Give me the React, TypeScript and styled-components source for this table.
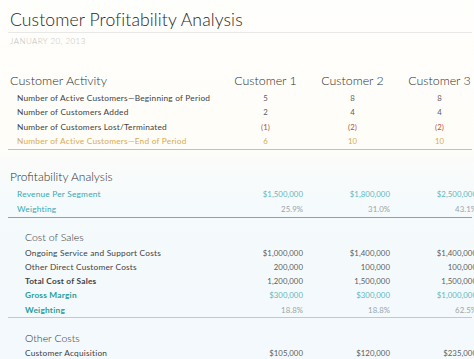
import React from "react";
import styled, { createGlobalStyle, css } from "styled-components";

const GlobalStyle = createGlobalStyle`
  html, body {
    margin: 0;
    padding: 0;
    width: 474px;
    height: 359px;
    overflow: hidden;
  }
  body {
    font-family: "Lato", "Liberation Sans", sans-serif;
    background: linear-gradient(
      to bottom,
      #fefefc 0px,
      #fffdf8 140px,
      #fbfcfa 160px,
      #f5fafc 200px,
      #f3f9fc 359px
    );
    color: #3a3a3a;
  }
`;

const Sheet = styled.div`
  width: 490px;
  padding: 0 0 0 8px;
  box-sizing: border-box;
`;

const TitleBar = styled.header`
  width: 464px;
  padding: 9px 0 0 2px;
  height: 33px;
  box-sizing: border-box;
  border-bottom: 1px solid #e8e8e6;
`;

const Title = styled.h1`
  margin: 0;
  font-size: 17.6px;
  line-height: 22px;
  font-weight: 300;
  color: #262626;
  letter-spacing: 0.1px;
`;

const DateLine = styled.div`
  padding: 3px 0 0 2px;
  font-size: 8px;
  line-height: 10px;
  letter-spacing: 0.45px;
  font-weight: 300;
  color: #bdbdb8;
`;

const Grid = styled.div<{ $top: number }>`
  display: grid;
  grid-template-columns: 214px 87px 87px 87px;
  margin-top: ${(p) => p.$top}px;
`;

type Tone = "dark" | "gold" | "teal" | "tealBold" | "red" | "grey" | "lightTeal" | "lightGrey";

const toneColor: Record<Tone, string> = {
  dark: "#424242",
  gold: "#d9ab52",
  teal: "#3aa9b2",
  tealBold: "#2a9d9a",
  red: "#b5533f",
  grey: "#5e5e5e",
  lightTeal: "#62b8c0",
  lightGrey: "#98a6a8",
};

const SectionTitle = styled.div<{ $size: number; $height: number; $indent: number }>`
  grid-column: 1 / 2;
  font-size: ${(p) => p.$size}px;
  line-height: ${(p) => p.$height}px;
  height: ${(p) => p.$height}px;
  padding-left: ${(p) => p.$indent}px;
  font-weight: 300;
  color: #2e2e2e;
  white-space: nowrap;
`;

const ColumnHead = styled.div<{ $height: number }>`
  font-size: 12.4px;
  line-height: ${(p) => p.$height}px;
  height: ${(p) => p.$height}px;
  font-weight: 300;
  text-align: center;
  color: #2e2e2e;
  white-space: nowrap;
`;

const Spacer = styled.div`
  grid-column: 2 / 5;
`;

const Label = styled.div<{ $tone: Tone; $indent: number; $bold?: boolean; $height: number }>`
  font-size: 8.3px;
  letter-spacing: 0.22px;
  line-height: ${(p) => p.$height}px;
  height: ${(p) => p.$height}px;
  padding-left: ${(p) => p.$indent}px;
  color: ${(p) => toneColor[p.$tone]};
  font-weight: ${(p) => (p.$bold ? 700 : 400)};
  white-space: nowrap;
`;

const Value = styled.div<{ $tone: Tone; $align: "center" | "right"; $height: number }>`
  font-size: 7.8px;
  letter-spacing: 0.05px;
  line-height: ${(p) => p.$height}px;
  height: ${(p) => p.$height}px;
  color: ${(p) => toneColor[p.$tone]};
  text-align: ${(p) => p.$align};
  white-space: nowrap;
  ${(p) =>
    p.$align === "right" &&
    css`
      padding-right: 6px;
    `}
`;

const Rule = styled.div<{ $color: string }>`
  grid-column: 1 / 5;
  width: 464px;
  height: 1px;
  background: ${(p) => p.$color};
`;

type RowData = {
  label: string;
  values: string[];
  labelTone: Tone;
  valueTone: Tone;
  bold?: boolean;
};

const Row: React.FC<{ row: RowData; indent: number; align: "center" | "right"; height: number }> = ({
  row,
  indent,
  align,
  height,
}) => (
  <>
    <Label $tone={row.labelTone} $indent={indent} $bold={row.bold} $height={height}>
      {row.label}
    </Label>
    {row.values.map((v, i) => (
      <Value key={i} $tone={row.valueTone} $align={align} $height={height}>
        {v}
      </Value>
    ))}
  </>
);

const activity: RowData[] = [
  { label: "Number of Active Customers\u2014Beginning of Period", values: ["5", "8", "8"], labelTone: "dark", valueTone: "grey" },
  { label: "Number of Customers Added", values: ["2", "4", "4"], labelTone: "dark", valueTone: "grey" },
  { label: "Number of Customers Lost/Terminated", values: ["(1)", "(2)", "(2)"], labelTone: "dark", valueTone: "red" },
  { label: "Number of Active Customers\u2014End of Period", values: ["6", "10", "10"], labelTone: "gold", valueTone: "gold" },
];

const profitability: RowData[] = [
  { label: "Revenue Per Segment", values: ["$1,500,000", "$1,800,000", "$2,500,000"], labelTone: "teal", valueTone: "lightTeal" },
  { label: "Weighting", values: ["25.9%", "31.0%", "43.1%"], labelTone: "teal", valueTone: "lightGrey" },
];

const costOfSales: RowData[] = [
  { label: "Ongoing Service and Support Costs", values: ["$1,000,000", "$1,400,000", "$1,400,000"], labelTone: "dark", valueTone: "grey" },
  { label: "Other Direct Customer Costs", values: ["200,000", "100,000", "100,000"], labelTone: "dark", valueTone: "grey" },
  { label: "Total Cost of Sales", values: ["1,200,000", "1,500,000", "1,500,000"], labelTone: "dark", valueTone: "grey", bold: true },
  { label: "Gross Margin", values: ["$300,000", "$300,000", "$1,000,000"], labelTone: "tealBold", valueTone: "lightTeal", bold: true },
  { label: "Weighting", values: ["18.8%", "18.8%", "62.5%"], labelTone: "tealBold", valueTone: "lightGrey", bold: true },
];

const otherCosts: RowData[] = [
  { label: "Customer Acquisition", values: ["$105,000", "$120,000", "$235,000"], labelTone: "dark", valueTone: "grey" },
];

export default function App() {
  return (
    <>
      <GlobalStyle />
      <Sheet>
        <TitleBar>
          <Title>Customer Profitability Analysis</Title>
        </TitleBar>
        <DateLine>JANUARY 20, 2013</DateLine>

        <Grid $top={24}>
          <SectionTitle $size={12.6} $height={21} $indent={2}>
            Customer Activity
          </SectionTitle>
          <ColumnHead $height={21}>Customer 1</ColumnHead>
          <ColumnHead $height={21}>Customer 2</ColumnHead>
          <ColumnHead $height={21}>Customer 3</ColumnHead>
          {activity.map((r) => (
            <Row key={r.label} row={r} indent={9} align="center" height={14.4} />
          ))}
          <Rule $color="#d6c08c" />
        </Grid>

        <Grid $top={16}>
          <SectionTitle $size={12} $height={21} $indent={2}>
            Profitability Analysis
          </SectionTitle>
          <Spacer />
          {profitability.map((r) => (
            <Row key={r.label} row={r} indent={9} align="right" height={15} />
          ))}
          <Rule $color="#7fa9ab" />
        </Grid>

        <Grid $top={11}>
          <SectionTitle $size={10.5} $height={17} $indent={17}>
            Cost of Sales
          </SectionTitle>
          <Spacer />
          {costOfSales.map((r) => (
            <Row key={r.label + r.values[0]} row={r} indent={17} align="right" height={14.25} />
          ))}
          <Rule $color="#a9d3d5" />
        </Grid>

        <Grid $top={12}>
          <SectionTitle $size={10.5} $height={16} $indent={17}>
            Other Costs
          </SectionTitle>
          <Spacer />
          {otherCosts.map((r) => (
            <Row key={r.label} row={r} indent={17} align="right" height={14.25} />
          ))}
        </Grid>
      </Sheet>
    </>
  );
}
